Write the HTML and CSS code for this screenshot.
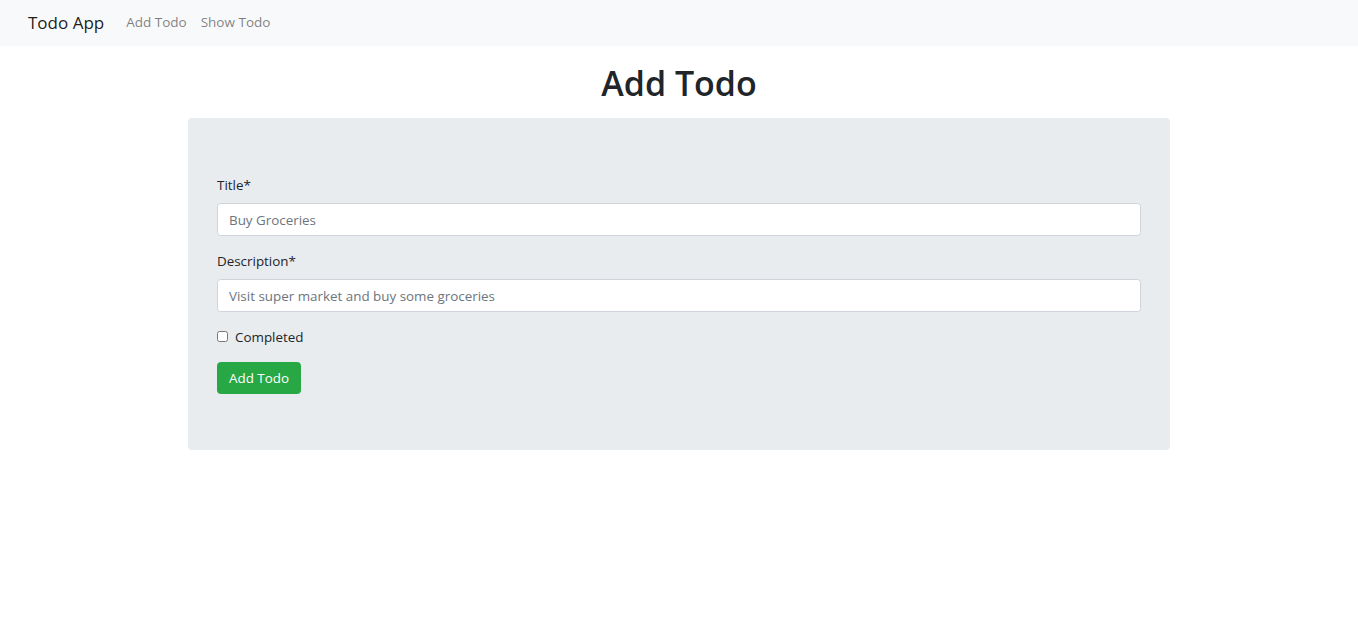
FILE: index.html
```html
<!DOCTYPE html>
<html lang="en">
<head>
<meta charset="utf-8">
<title>Todo App</title>
<link rel="stylesheet" href="styles.css">
</head>
<body>
<nav class="navbar">
  <a class="brand" href="#">Todo App</a>
  <a class="nav-link" href="#">Add Todo</a>
  <a class="nav-link" href="#">Show Todo</a>
</nav>
<h1 class="page-title">Add Todo</h1>
<div class="jumbotron">
  <form class="todo-form">
    <div class="form-group">
      <label class="form-label" for="title">Title*</label>
      <input class="form-control" id="title" type="text" placeholder="Buy Groceries">
    </div>
    <div class="form-group">
      <label class="form-label" for="desc">Description*</label>
      <input class="form-control" id="desc" type="text" placeholder="Visit super market and buy some groceries">
    </div>
    <div class="form-check">
      <input class="check-input" id="done" type="checkbox">
      <label class="check-label" for="done">Completed</label>
    </div>
    <button class="btn-success" type="button">Add Todo</button>
  </form>
</div>
</body>
</html>
```

FILE: styles.css
```css
* { box-sizing: border-box; }
body {
  margin: 0;
  font-family: "Open Sans", "Noto Sans", sans-serif;
  font-size: 13.4px;
  line-height: 21px;
  color: #212529;
  background: #fff;
}
.navbar {
  height: 46px;
  background: #f8f9fa;
  display: flex;
  align-items: center;
  padding: 0 28px 1px;
}
.brand {
  font-size: 17px;
  color: rgba(0,0,0,.9);
  text-decoration: none;
  margin-right: 22px;
}
.nav-link {
  font-size: 13.5px;
  color: rgba(0,0,0,.5);
  text-decoration: none;
  margin-right: 14px;
}
.page-title {
  text-align: center;
  font-size: 34px;
  font-weight: 600;
  line-height: 42px;
  margin: 16px 0 14px;
  color: #212529;
}
.jumbotron {
  width: 982px;
  margin: 0 auto;
  background: #e9ecef;
  border-radius: 4px;
  padding: 57px 29px 56px;
}
.form-group { margin-bottom: 15px; }
.form-label {
  display: block;
  margin-bottom: 7px;
}
.form-control {
  display: block;
  width: 100%;
  height: 33px;
  padding: 5px 11px;
  font: inherit;
  color: #495057;
  background: #fff;
  border: 1px solid #ced4da;
  border-radius: 3.5px;
}
.form-control::placeholder { color: #6c757d; opacity: 1; }
.form-check {
  display: flex;
  align-items: center;
  margin: 0 0 14px;
}
.check-input {
  width: 11px;
  height: 11px;
  margin: 0 7px 0 0;
  position: relative;
  top: -1px;
}
.btn-success {
  display: block;
  height: 32px;
  padding: 0 11px;
  font: inherit;
  color: #fff;
  background: #28a745;
  border: 1px solid #28a745;
  border-radius: 3.5px;
}
```
